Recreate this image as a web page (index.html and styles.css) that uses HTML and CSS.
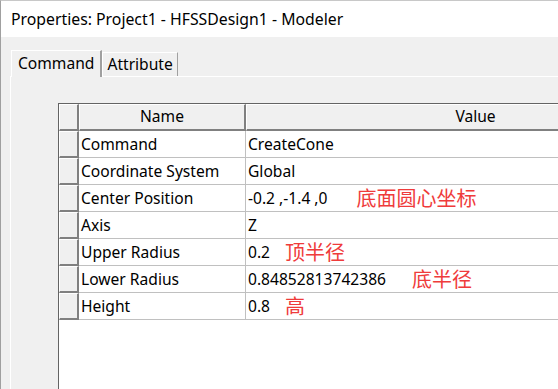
FILE: index.html
```html
<!DOCTYPE html>
<html lang="zh">
<head>
    <meta charset="UTF-8">
    <title>Properties: Project1 - HFSSDesign1 - Modeler</title>
    <link rel="stylesheet" href="styles.css">
</head>
<body>
    <div class="window">
        <div class="titlebar">Properties: Project1 - HFSSDesign1 - Modeler</div>

        <div class="tabs">
            <div class="tab active">Command</div>
            <div class="tab">Attribute</div>
        </div>

        <div class="panel">
            <div class="grid">
                <div class="row header">
                    <div class="selector"></div>
                    <div class="hcell">Name</div>
                    <div class="hcell">Value</div>
                </div>
                <div class="row">
                    <div class="selector"></div>
                    <div class="cell">Command</div>
                    <div class="cell">CreateCone</div>
                </div>
                <div class="row">
                    <div class="selector"></div>
                    <div class="cell">Coordinate System</div>
                    <div class="cell">Global</div>
                </div>
                <div class="row">
                    <div class="selector"></div>
                    <div class="cell">Center Position</div>
                    <div class="cell">-0.2 ,-1.4 ,0<span class="note note-center">底面圆心坐标</span></div>
                </div>
                <div class="row">
                    <div class="selector"></div>
                    <div class="cell">Axis</div>
                    <div class="cell">Z</div>
                </div>
                <div class="row">
                    <div class="selector"></div>
                    <div class="cell">Upper Radius</div>
                    <div class="cell">0.2<span class="note note-short">顶半径</span></div>
                </div>
                <div class="row">
                    <div class="selector"></div>
                    <div class="cell">Lower Radius</div>
                    <div class="cell">0.84852813742386<span class="note note-lower">底半径</span></div>
                </div>
                <div class="row">
                    <div class="selector"></div>
                    <div class="cell">Height</div>
                    <div class="cell">0.8<span class="note note-short">高</span></div>
                </div>
            </div>
        </div>
    </div>
</body>
</html>
```

FILE: styles.css
```css
/* Properties window */
body {
    margin: 0;
    background-color: #f0f0f0;
    font-family: 'Noto Sans', 'Noto Sans CJK SC', sans-serif;
    overflow: hidden;
}

.window {
    height: 389px;
    border-left: 1px solid #a0a0a0;
    border-top: 1px solid #c8c8c8;
    box-sizing: border-box;
    display: flex;
    flex-direction: column;
}

.titlebar {
    background-color: white;
    height: 36px;
    padding-left: 10px;
    font-size: 15.8px;
    line-height: 37px;
    color: #000;
    flex-shrink: 0;
}

/* tabs */
.tabs {
    display: flex;
    align-items: flex-end;
    margin-top: 12px;
    padding-left: 10px;
    height: 27px;
    flex-shrink: 0;
}

.tab {
    font-size: 15.6px;
    height: 24px;
    line-height: 22px;
    padding: 0 4px;
    border-top: 1px solid #fff;
    border-left: 1px solid #fff;
    border-right: 1px solid #a0a0a0;
    box-sizing: border-box;
    color: #000;
}

.tab.active {
    height: 27px;
    line-height: 24px;
    padding: 0 6px;
    margin-bottom: -1px;
    position: relative;
    background-color: #f0f0f0;
    border-right: 2px solid #a0a0a0;
}

/* tab page */
.panel {
    flex: 1;
    margin-left: 9px;
    border-top: 1px solid #fff;
    border-left: 1px solid #fff;
    padding: 26px 0 0 47px;
    overflow: hidden;
}

.grid {
    background-color: white;
    height: 100%;
    width: 700px;
    border-top: 1px solid #646464;
    border-left: 1px solid #646464;
}

.row {
    display: grid;
    grid-template-columns: 20px 167px 460px;
    height: 27px;
}

.selector,
.hcell {
    background-color: #f0f0f0;
    border-top: 1px solid #fff;
    border-left: 1px solid #fff;
    border-right: 2px solid #808080;
    border-bottom: 2px solid #808080;
    box-sizing: border-box;
}

.hcell {
    text-align: center;
    font-size: 15.6px;
    line-height: 23px;
}

.cell {
    border-right: 1px solid #c0c0c0;
    border-bottom: 1px solid #c0c0c0;
    box-sizing: border-box;
    padding-left: 2px;
    font-size: 15.6px;
    line-height: 26px;
    white-space: nowrap;
}

/* red annotations */
.note {
    color: #ef3b3b;
    font-family: 'Noto Sans CJK SC', sans-serif;
    font-size: 20px;
    line-height: 25px;
    vertical-align: top;
}

.note-center { margin-left: 29px; }
.note-short  { margin-left: 15px; }
.note-lower  { margin-left: 26px; }
```
